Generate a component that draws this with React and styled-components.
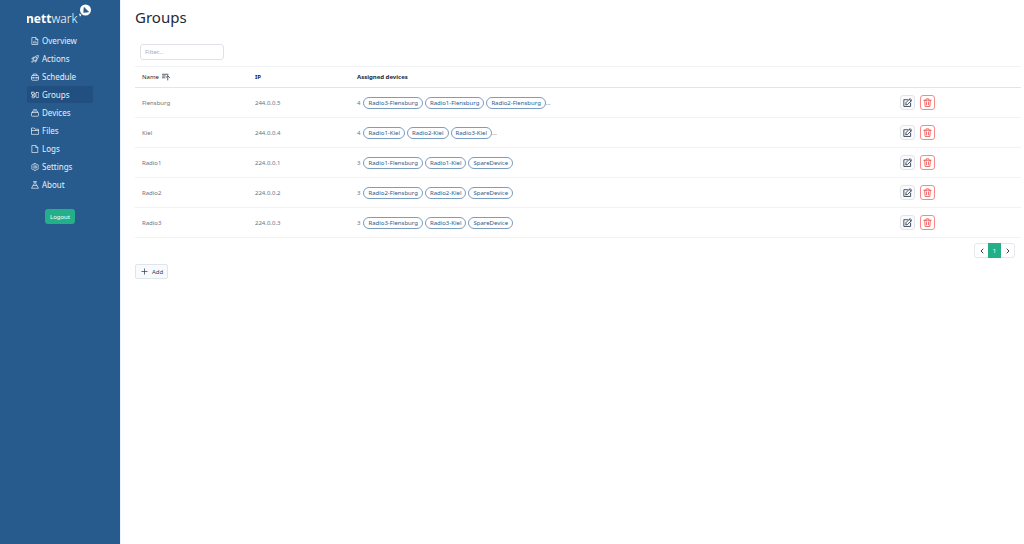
import styled, { createGlobalStyle, css } from 'styled-components';
import { LuPlus, LuChevronLeft, LuChevronRight } from 'react-icons/lu';

const GlobalStyle = createGlobalStyle`
  * {
    box-sizing: border-box;
  }
  body {
    margin: 0;
    background: #fff;
    color: #1f2937;
    font-family: "Noto Sans", "Open Sans", sans-serif;
    font-size: 6px;
  }
  button, input {
    font-family: inherit;
    font-size: inherit;
    margin: 0;
  }
`;

const Layout = styled.div`
  display: grid;
  grid-template-columns: 120px 1fr;
  min-height: 100vh;
`;

const Sidebar = styled.aside`
  display: flex;
  flex-direction: column;
  align-items: center;
  padding-top: 4px;
  background: #285b8d;
`;

const Logo = styled.svg`
  display: block;
  width: 66px;
  height: 22px;
  font-family: "Noto Sans", sans-serif;
  font-size: 12px;
  fill: #fff;
`;

const Nav = styled.nav`
  display: flex;
  flex-direction: column;
  gap: 1px;
  width: 66px;
  margin-top: 6px;
`;

const NavLink = styled.a`
  display: flex;
  align-items: center;
  gap: 3px;
  height: 17px;
  padding: 0 4px;
  border-radius: 2px;
  color: #e8eff6;
  font-size: 8px;
  line-height: 12px;
  text-decoration: none;
  ${({ $active }) => $active && css`
    background: #204f80;
  `}
`;

const Glyph = styled.svg`
  flex: none;
  width: ${({ $size }) => $size || 8}px;
  height: ${({ $size }) => $size || 8}px;
  fill: none;
  stroke: currentColor;
  stroke-width: ${({ $weight }) => $weight || 1.4};
  stroke-linecap: round;
  stroke-linejoin: round;
`;

const LogoutButton = styled.button`
  height: 15px;
  margin-top: 16px;
  padding: 0 5px;
  border: 0;
  border-radius: 3px;
  background: #23b088;
  color: #fff;
`;

const Main = styled.main`
  display: flex;
  flex-direction: column;
  align-items: flex-start;
  padding: 6px 3px 0 14px;
  border-left: 1px solid #edf2f8;
`;

const Title = styled.h1`
  margin: 0;
  font-size: 15px;
  font-weight: 400;
  line-height: 22px;
`;

const FilterInput = styled.input`
  width: 84px;
  height: 16px;
  margin: 16px 0 6px 5px;
  padding: 0 4px;
  border: 1px solid #dfe3e8;
  border-radius: 3px;
  outline: 0;
  &::placeholder {
    color: #a3abb7;
  }
`;

const Table = styled.table`
  width: 100%;
  border-collapse: collapse;
  border-top: 1px solid #f1f2f4;
  table-layout: fixed;
  line-height: 10px;
`;

const HeadCell = styled.th`
  width: ${({ $width }) => $width || 'auto'};
  height: 21px;
  padding: 0 7px;
  border-bottom: 1px solid #e3e5e9;
  font-weight: ${({ $sorted }) => ($sorted ? 400 : 700)};
  text-align: left;
`;

const SortLabel = styled.span`
  display: flex;
  align-items: center;
  gap: 3px;
`;

const Cell = styled.td`
  height: 30px;
  padding: 0 7px;
  border-bottom: 1px solid #f1f2f4;
  color: #6b7280;
`;

const Devices = styled.div`
  display: flex;
  align-items: center;
  gap: 3px;
`;

const Tags = styled.div`
  display: flex;
  gap: 2px;
`;

const TagGroup = styled.div`
  display: flex;
  align-items: center;
`;

const Tag = styled.span`
  height: 12px;
  padding: 0 4px;
  border: 1px solid #7b9dc0;
  border-radius: 6px;
  color: #285b8d;
  white-space: nowrap;
`;

const Actions = styled.div`
  display: flex;
  gap: 5px;
`;

const IconButton = styled.button`
  display: flex;
  align-items: center;
  justify-content: center;
  width: 15px;
  height: 15px;
  padding: 0;
  border: 1px solid ${({ $danger }) => ($danger ? '#f58a8a' : '#e2e6ec')};
  border-radius: 3px;
  background: ${({ $danger }) => ($danger ? '#fff' : '#f8fafc')};
  color: ${({ $danger }) => ($danger ? '#ef5350' : '#374151')};
`;

const Pagination = styled.div`
  display: flex;
  align-self: flex-end;
  margin: 5px 6px 6px 0;
  border: 1px solid #e5e8ec;
  border-radius: 3px;
`;

const PageButton = styled.button`
  display: flex;
  align-items: center;
  justify-content: center;
  width: 13px;
  height: 13px;
  padding: 0;
  border: 0;
  background: ${({ $current }) => ($current ? '#23b088' : 'transparent')};
  box-shadow: ${({ $current }) => ($current ? '0 1px #23b088, 0 -1px #23b088' : 'none')};
  color: ${({ $current }) => ($current ? '#fff' : '#374151')};
`;

const AddButton = styled.button`
  display: flex;
  align-items: center;
  gap: 3px;
  height: 15px;
  padding: 0 4px;
  border: 1px solid #dfe5ec;
  border-radius: 2px;
  background: #f8fafc;
  color: #334155;
`;

const icons = {
  overview: (
    <>
      <path d="M2.500 1h7l4 4v10h-11zM9.500 1v4h4" />
      <path d="M5.500 12V9.500M8 12V8M10.500 12v-1.500" />
    </>
  ),
  actions: (
    <>
      <path d="M5 8c1-4 4-6.500 10-7C14.500 7 12 10 8 11z" />
      <path d="M5.500 7.500L1.500 8 4 4.500h3M8.500 10.500L8 14.500l3.500-2.500V9M4.500 10.500C2.500 11 1.500 12.500 1.500 14.500c2 0 3.500-.5 4-3" />
      <circle cx="10.500" cy="5.500" r="1" />
    </>
  ),
  schedule: (
    <>
      <rect x="1" y="5" width="14" height="9.500" rx="2" />
      <path d="M4.500 5V2h7v3M1 9.500h14M4.500 8.500v2M11.500 8.500v2" />
    </>
  ),
  groups: (
    <>
      <rect x="1" y="2.500" width="5.500" height="4.500" rx="1" />
      <rect x="2" y="9.500" width="4.500" height="4" rx="1" />
      <rect x="10" y="3" width="5.500" height="10" rx="1" />
      <path d="M6.500 5H8v6.500H6.500" />
    </>
  ),
  devices: (
    <>
      <rect x="1" y="7" width="14" height="7.500" rx="1.500" />
      <path d="M2.500 7L3.500 4h9l1 3M5 1.500h6" />
    </>
  ),
  files: <path d="M1 14V2h5.500L8 4.500h7V14zM1 7h14" />,
  logs: <path d="M2.500 1h7l4 4v10h-11zM9.500 1v4h4" />,
  settings: (
    <>
      <path d="M6.500 1h3l.5 2 1.500.8 2-.6 1.500 2.600L13.500 8l1.500 2.200-1.500 2.600-2-.6-1.500.8-.5 2h-3l-.5-2-1.500-.8-2 .6L1 10.200 2.500 8 1 5.800l1.500-2.600 2 .6L6 3z" />
      <circle cx="8" cy="8" r="2.500" />
    </>
  ),
  about: (
    <>
      <path d="M5 1.500h6M6.500 1.500v4L4.500 9M9.500 1.500v4l2 3.500M4.500 9h7" />
      <path d="M3.500 10L1 14.500h14L12.500 10" />
    </>
  ),
};

const navItems = ['Overview', 'Actions', 'Schedule', 'Groups', 'Devices', 'Files', 'Logs', 'Settings', 'About'];

const groups = [
  { name: 'Flensburg', ip: '244.0.0.5', count: 4, devices: ['Radio3-Flensburg', 'Radio1-Flensburg', 'Radio2-Flensburg'] },
  { name: 'Kiel', ip: '244.0.0.4', count: 4, devices: ['Radio1-Kiel', 'Radio2-Kiel', 'Radio3-Kiel'] },
  { name: 'Radio1', ip: '224.0.0.1', count: 3, devices: ['Radio1-Flensburg', 'Radio1-Kiel', 'SpareDevice'] },
  { name: 'Radio2', ip: '224.0.0.2', count: 3, devices: ['Radio2-Flensburg', 'Radio2-Kiel', 'SpareDevice'] },
  { name: 'Radio3', ip: '224.0.0.3', count: 3, devices: ['Radio3-Flensburg', 'Radio3-Kiel', 'SpareDevice'] },
];

const GroupRow = ({ group }) => (
  <tr>
    <Cell>{group.name}</Cell>
    <Cell>{group.ip}</Cell>
    <Cell>
      <Devices>
        <span>{group.count}</span>
        <TagGroup>
          <Tags>
            {group.devices.map(device => <Tag key={device}>{device}</Tag>)}
          </Tags>
          {group.count > group.devices.length && <span>...</span>}
        </TagGroup>
      </Devices>
    </Cell>
    <Cell>
      <Actions>
        <IconButton aria-label={`Edit ${group.name}`}>
          <Glyph viewBox="0 0 16 16" $size={9} $weight={1.6}>
            <path d="M8 3H1.500v12h12V9" />
            <path d="M5 11.500l.5-3.500L12.500 1 15.500 4l-7 7zM11 2.500l3 3" />
          </Glyph>
        </IconButton>
        <IconButton $danger aria-label={`Delete ${group.name}`}>
          <Glyph viewBox="0 0 16 16" $size={9} $weight={1.5}>
            <path d="M1.500 4h13M5 4l.7-2.500h4.600L11 4M3 4l.7 11h8.600L13 4M6.300 7v5M9.700 7v5" />
          </Glyph>
        </IconButton>
      </Actions>
    </Cell>
  </tr>
);

const App = () => {
  return (
    <>
      <GlobalStyle />
      <Layout>
        <Sidebar>
          <Logo viewBox="0 0 66 22" role="img" aria-label="nettwark">
            <text x="-1" y="19">
              <tspan fontWeight="700">nett</tspan>
              <tspan fontWeight="300">wark</tspan>
            </text>
            <circle cx="58.500" cy="6" r="5.500" />
            <path d="M52 9.500l2.500 1.200-1.500 2z" />
            <path d="M57 3.200l-.3 5.300 5-.6z" fill="#285b8d" stroke="#285b8d" strokeWidth="0.500" strokeLinejoin="round" />
          </Logo>
          <Nav>
            {navItems.map(item => (
              <NavLink key={item} href="#" $active={item === 'Groups'}>
                <Glyph viewBox="0 0 16 16">{icons[item.toLowerCase()]}</Glyph>
                {item}
              </NavLink>
            ))}
          </Nav>
          <LogoutButton>Logout</LogoutButton>
        </Sidebar>
        <Main>
          <Title>Groups</Title>
          <FilterInput placeholder="Filter..." aria-label="Filter" />
          <Table>
            <thead>
              <tr>
                <HeadCell $sorted $width="113px">
                  <SortLabel>
                    Name
                    <Glyph viewBox="0 0 16 16" $weight={1.5}>
                      <path d="M1 2.500h11M1 6h5.500M1 9.500h4M11.500 14V6M8 9l3.500-3.500L15 9" />
                    </Glyph>
                  </SortLabel>
                </HeadCell>
                <HeadCell $width="102px">IP</HeadCell>
                <HeadCell>Assigned devices</HeadCell>
                <HeadCell $width="128px" aria-label="Actions" />
              </tr>
            </thead>
            <tbody>
              {groups.map(group => <GroupRow key={group.name} group={group} />)}
            </tbody>
          </Table>
          <Pagination>
            <PageButton aria-label="Previous page"><LuChevronLeft size={8} strokeWidth={3} /></PageButton>
            <PageButton $current>1</PageButton>
            <PageButton aria-label="Next page"><LuChevronRight size={8} strokeWidth={3} /></PageButton>
          </Pagination>
          <AddButton>
            <LuPlus size={9} />
            Add
          </AddButton>
        </Main>
      </Layout>
    </>
  );
}

export default App;
